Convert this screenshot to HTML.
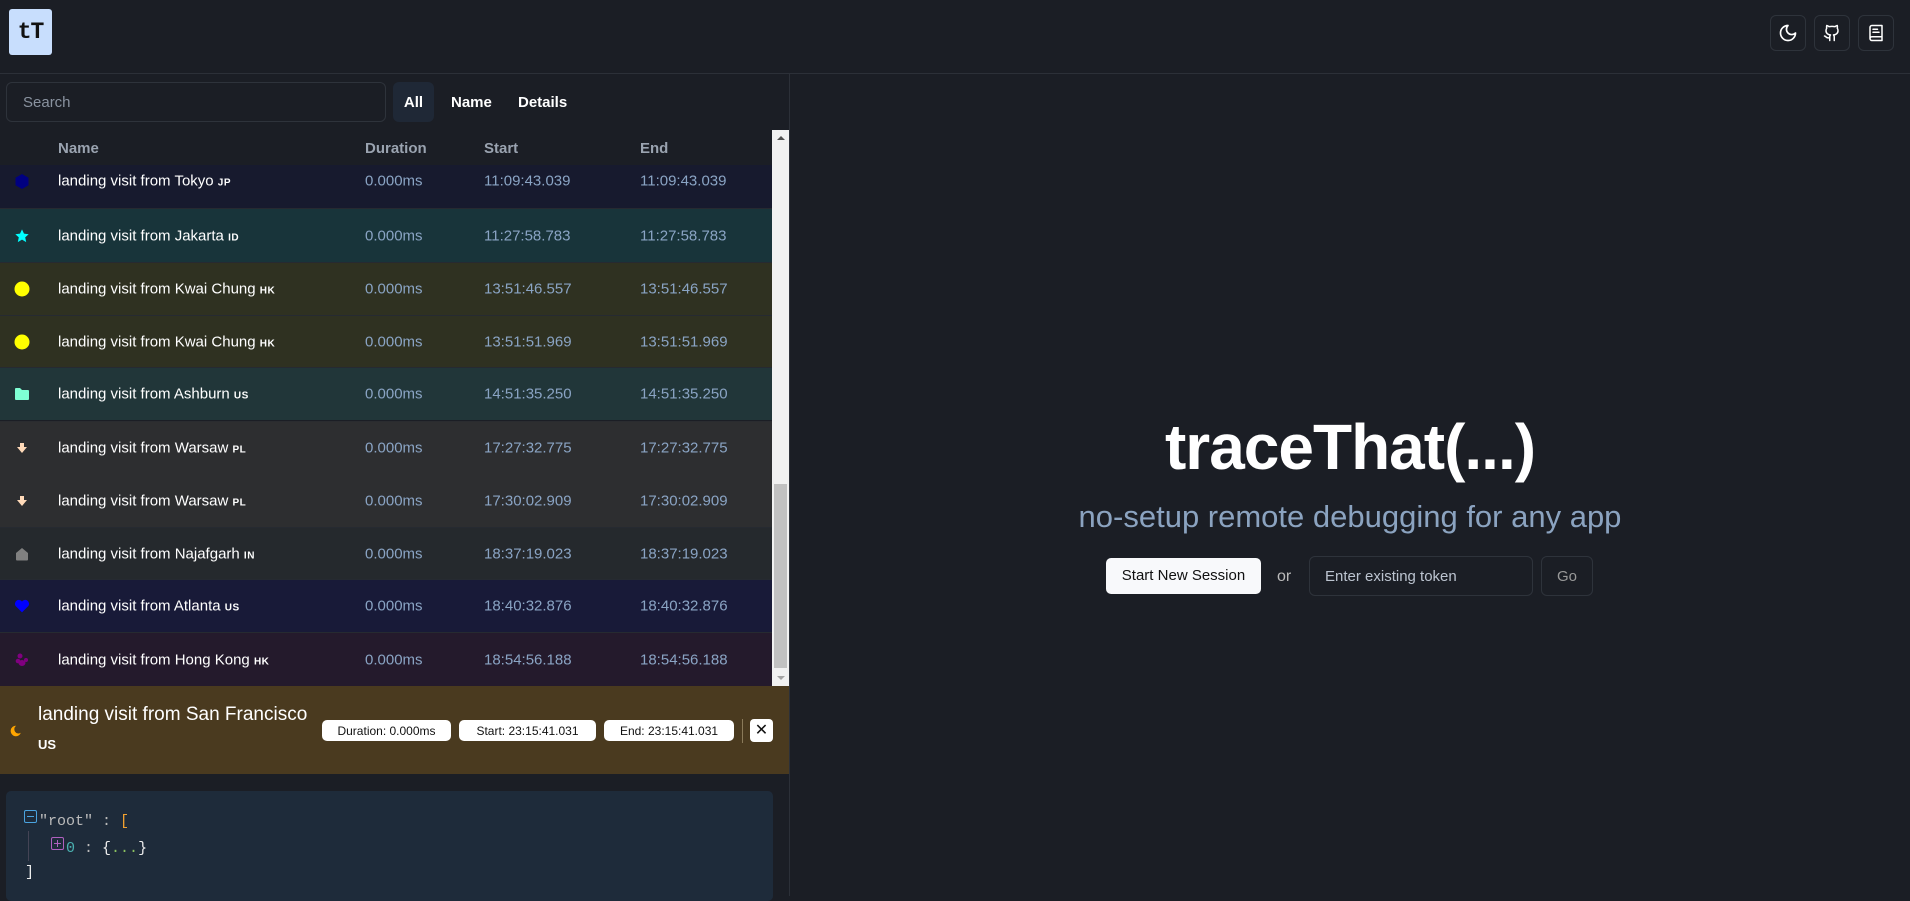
<!DOCTYPE html>
<html><head><meta charset="utf-8"><style>
*{box-sizing:border-box;margin:0;padding:0}
body{width:1910px;height:896px;overflow:hidden;background:#1b1e25;font-family:"Liberation Sans",sans-serif;color:#fff;position:relative}
.abs{position:absolute}
.logo{left:9px;top:9px;width:43px;height:46px;background:#c8defd;border-radius:3px;color:#111;font:bold 23px "Liberation Mono",monospace;display:flex;align-items:center;justify-content:center;letter-spacing:-1px}
.hline{left:0;top:73px;width:1910px;height:1px;background:#2c3038}
.vline{left:789px;top:74px;width:1px;height:822px;background:#2c3038}
.ib{top:15px;width:36px;height:36px;border:1px solid #2e333b;border-radius:6px;display:flex;align-items:center;justify-content:center}
.search{left:6px;top:82px;width:380px;height:40px;border:1px solid #2e333b;border-radius:6px;color:#8a93a0;font-size:15px;padding:11px 16px}
.tab{top:82px;height:40px;font-size:15px;font-weight:bold;padding:12px 0}
.th{top:140px;font-size:15px;color:#9aa3b0;font-weight:bold}
.row{left:0;width:772px;height:53px;font-size:15px;border-top:1px solid #262a31}
.row span{position:absolute;top:50%;transform:translateY(-50%)}
.row .n{left:58px;color:#fff}
.row .n small{font-size:10px;font-weight:bold;letter-spacing:0.5px}
.row .d{left:365px;color:#8aa4c4}
.row .s{left:484px;color:#8aa4c4}
.row .e{left:640px;color:#8aa4c4}
.row .i{left:14px;width:16px;height:16px;display:flex;align-items:center;justify-content:center}
.first span{top:38%}
.pill{top:720px;height:21px;background:#fff;color:#111;border-radius:5px;font-size:12px;padding:4px 0;text-align:center;white-space:nowrap}
.mono{font-family:"Liberation Mono",monospace;font-size:15px}
</style></head><body>
<div class="abs logo">tT</div>
<div class="abs ib" style="left:1770px"><svg width="20" height="20" viewBox="0 0 24 24" fill="none" stroke="#fff" stroke-width="2" stroke-linecap="round" stroke-linejoin="round"><path d="M12 3a6 6 0 0 0 9 9 9 9 0 1 1-9-9Z"/></svg></div>
<div class="abs ib" style="left:1814px"><svg width="18" height="18" viewBox="0 0 24 24" fill="none" stroke="#fff" stroke-width="2" stroke-linecap="round" stroke-linejoin="round"><path d="M15 22v-4a4.8 4.8 0 0 0-1-3.5c3 0 6-2 6-5.5.08-1.25-.27-2.48-1-3.5.28-1.15.28-2.350 0-3.5 0 0-1 0-3 1.5-2.64-.5-5.36-.5-8 0C6 2 5 2 5 2c-.3 1.15-.3 2.35 0 3.5A5.4 5.4 0 0 0 4 9c0 3.5 3 5.5 6 5.5-.39.49-.68 1.05-.85 1.65-.17.6-.22 1.23-.15 1.85v4"/><path d="M9 18c-4.51 2-5-2-7-2"/></svg></div>
<div class="abs ib" style="left:1858px"><svg width="18" height="18" viewBox="0 0 24 24" fill="none" stroke="#fff" stroke-width="2" stroke-linecap="round" stroke-linejoin="round"><path d="M4 19.5v-15A2.5 2.5 0 0 1 6.5 2H20v20H6.5a2.5 2.5 0 0 1 0-5H20"/><path d="M8 7h6M8 11h8"/></svg></div>
<div class="abs hline"></div>
<div class="abs vline"></div>

<div class="abs search">Search</div>
<div class="abs tab" style="left:393px;width:41px;background:#1f2836;border-radius:6px;text-align:center">All</div>
<div class="abs tab" style="left:451px">Name</div>
<div class="abs tab" style="left:518px">Details</div>

<div class="abs th" style="left:58px">Name</div>
<div class="abs th" style="left:365px">Duration</div>
<div class="abs th" style="left:484px">Start</div>
<div class="abs th" style="left:640px">End</div>

<div class="abs row first" style="top:165px;height:43px;background:#171a2e;border-top:none"><span class="i"><svg width="14" height="15" viewBox="0 0 14 15"><path d="M7 0L13.5 3.7V11.3L7 15L.5 11.3V3.7Z" fill="#000080"/></svg></span><span class="n">landing visit from Tokyo <small>JP</small></span><span class="d">0.000ms</span><span class="s">11:09:43.039</span><span class="e">11:09:43.039</span></div>
<div class="abs row" style="top:208px;height:54px;background:#18343a"><span class="i"><svg width="16" height="16" viewBox="0 0 24 24"><path d="M12 2l3 6.5 7 .8-5.2 4.8 1.5 7L12 17.5 5.7 21.1l1.5-7L2 9.3l7-.8z" fill="#00ffff"/></svg></span><span class="n">landing visit from Jakarta <small>ID</small></span><span class="d">0.000ms</span><span class="s">11:27:58.783</span><span class="e">11:27:58.783</span></div>
<div class="abs row" style="top:262px;background:#2f3121"><span class="i"><svg width="16" height="16"><circle cx="8" cy="8" r="7.5" fill="#ffff00"/></svg></span><span class="n">landing visit from Kwai Chung <small>HK</small></span><span class="d">0.000ms</span><span class="s">13:51:46.557</span><span class="e">13:51:46.557</span></div>
<div class="abs row" style="top:315px;background:#2f3121"><span class="i"><svg width="16" height="16"><circle cx="8" cy="8" r="7.5" fill="#ffff00"/></svg></span><span class="n">landing visit from Kwai Chung <small>HK</small></span><span class="d">0.000ms</span><span class="s">13:51:51.969</span><span class="e">13:51:51.969</span></div>
<div class="abs row" style="top:367px;background:#213639"><span class="i"><svg width="16" height="14" viewBox="0 0 16 14"><path d="M1 2a1 1 0 0 1 1-1h4l2 2h6a1 1 0 0 1 1 1v8a1 1 0 0 1-1 1H2a1 1 0 0 1-1-1z" fill="#7fffd4"/></svg></span><span class="n">landing visit from Ashburn <small>US</small></span><span class="d">0.000ms</span><span class="s">14:51:35.250</span><span class="e">14:51:35.250</span></div>
<div class="abs row" style="top:421px;height:106px;background:#2d2e30;border-top:1px solid #2a2c30"></div>
<div class="abs row" style="top:421px;background:transparent;border-top:none"><span class="i"><svg width="12" height="12" viewBox="0 0 12 12"><path d="M4 1h4v4h3L6 11 1 5h3z" fill="#ffdab9"/></svg></span><span class="n">landing visit from Warsaw <small>PL</small></span><span class="d">0.000ms</span><span class="s">17:27:32.775</span><span class="e">17:27:32.775</span></div>
<div class="abs row" style="top:474px;background:transparent;border-top:none"><span class="i"><svg width="12" height="12" viewBox="0 0 12 12"><path d="M4 1h4v4h3L6 11 1 5h3z" fill="#ffdab9"/></svg></span><span class="n">landing visit from Warsaw <small>PL</small></span><span class="d">0.000ms</span><span class="s">17:30:02.909</span><span class="e">17:30:02.909</span></div>
<div class="abs row" style="top:527px;background:#25292d"><span class="i"><svg width="14" height="14" viewBox="0 0 14 14"><path d="M7 1l6 5v6.5a1 1 0 0 1-1 1H2a1 1 0 0 1-1-1V6z" fill="#808080"/></svg></span><span class="n">landing visit from Najafgarh <small>IN</small></span><span class="d">0.000ms</span><span class="s">18:37:19.023</span><span class="e">18:37:19.023</span></div>
<div class="abs row" style="top:579px;background:#181a38"><span class="i"><svg width="16" height="14" viewBox="0 0 24 22"><path d="M12 21L2 11a5.5 5.5 0 0 1 10-7 5.5 5.5 0 0 1 10 7z" fill="#0000ff"/></svg></span><span class="n">landing visit from Atlanta <small>US</small></span><span class="d">0.000ms</span><span class="s">18:40:32.876</span><span class="e">18:40:32.876</span></div>
<div class="abs row" style="top:632px;height:54px;background:#241a2c"><span class="i"><svg width="15" height="14" viewBox="0 0 15 14"><circle cx="5" cy="3" r="2.5" fill="#800080"/><circle cx="11" cy="7" r="2" fill="#800080"/><circle cx="3" cy="8" r="2.3" fill="#800080"/><ellipse cx="7" cy="10" rx="3.5" ry="3" fill="#800080"/></svg></span><span class="n">landing visit from Hong Kong <small>HK</small></span><span class="d">0.000ms</span><span class="s">18:54:56.188</span><span class="e">18:54:56.188</span></div>

<div class="abs" style="left:772px;top:130px;width:17px;height:556px;background:#f1f1f1"></div>
<div class="abs" style="left:774px;top:484px;width:13px;height:184px;background:#c1c1c1"></div>
<div class="abs" style="left:777px;top:136px;width:0;height:0;border-left:4px solid transparent;border-right:4px solid transparent;border-bottom:4px solid #505050"></div>
<div class="abs" style="left:777px;top:676px;width:0;height:0;border-left:4px solid transparent;border-right:4px solid transparent;border-top:4px solid #a3a3a3"></div>

<div class="abs" style="left:0;top:686px;width:789px;height:88px;background:#4a3a1f"></div>
<div class="abs" style="left:8px;top:724px"><svg width="14" height="14" viewBox="0 0 24 24"><path d="M14 3a9 9 0 1 0 8 12 7 7 0 0 1-8-12z" fill="#ffa500"/></svg></div>
<div class="abs" style="left:38px;top:704px;font-size:19px">landing visit from San Francisco</div>
<div class="abs" style="left:38px;top:737px;font-size:13px;font-weight:bold">US</div>
<div class="abs pill" style="left:322px;width:129px">Duration: 0.000ms</div>
<div class="abs pill" style="left:459px;width:137px">Start: 23:15:41.031</div>
<div class="abs pill" style="left:604px;width:130px">End: 23:15:41.031</div>
<div class="abs" style="left:742px;top:719px;width:1px;height:24px;background:#8a7a5a"></div>
<div class="abs" style="left:750px;top:719px;width:23px;height:23px;background:#fff;border-radius:4px;color:#111;font-size:16px;text-align:center;line-height:23px">✕</div>

<div class="abs" style="left:6px;top:791px;width:767px;height:110px;background:#1e2b3a;border-radius:5px"></div>
<div class="abs mono" style="left:24px;top:810px;color:#bbb"><span style="display:inline-block;width:13px;height:13px;border:1px solid #4aa3df;border-radius:2px;vertical-align:2px;position:relative;margin-right:2px"><span style="position:absolute;left:2px;top:5px;width:7px;height:1px;background:#4aa3df"></span></span>"root" : <span style="color:#f0a030">[</span></div>
<div class="abs" style="left:28px;top:831px;width:1px;height:30px;background:#445"></div>
<div class="abs mono" style="left:51px;top:837px;color:#bbb"><span style="display:inline-block;width:13px;height:13px;border:1px solid #b060c0;border-radius:2px;vertical-align:2px;position:relative;margin-right:2px"><span style="position:absolute;left:2px;top:5px;width:7px;height:1px;background:#b060c0"></span><span style="position:absolute;left:5px;top:2px;width:1px;height:7px;background:#b060c0"></span></span><span style="color:#4ab0b0">0</span> : <span style="color:#eee">{</span><span style="color:#8ac060">...</span><span style="color:#eee">}</span></div>
<div class="abs mono" style="left:25px;top:864px;color:#eee">]</div>

<div class="abs" style="left:790px;top:410px;width:1120px;text-align:center;font-size:64px;font-weight:bold;letter-spacing:-1px">traceThat(...)</div>
<div class="abs" style="left:790px;top:499px;width:1120px;text-align:center;font-size:31px;color:#8ba3c0">no-setup remote debugging for any app</div>
<div class="abs" style="left:1106px;top:558px;width:155px;height:36px;background:#f8f9fb;border-radius:5px;color:#111;font-size:15px;text-align:center;line-height:36px">Start New Session</div>
<div class="abs" style="left:1277px;top:568px;font-size:16px;color:#bbb">or</div>
<div class="abs" style="left:1309px;top:556px;width:224px;height:40px;border:1px solid #2e333b;border-radius:6px;color:#bcc4d0;font-size:15px;padding:11px 15px">Enter existing token</div>
<div class="abs" style="left:1541px;top:556px;width:52px;height:40px;border:1px solid #2e333b;border-radius:6px;color:#999;font-size:15px;text-align:center;line-height:40px">Go</div>
</body></html>
